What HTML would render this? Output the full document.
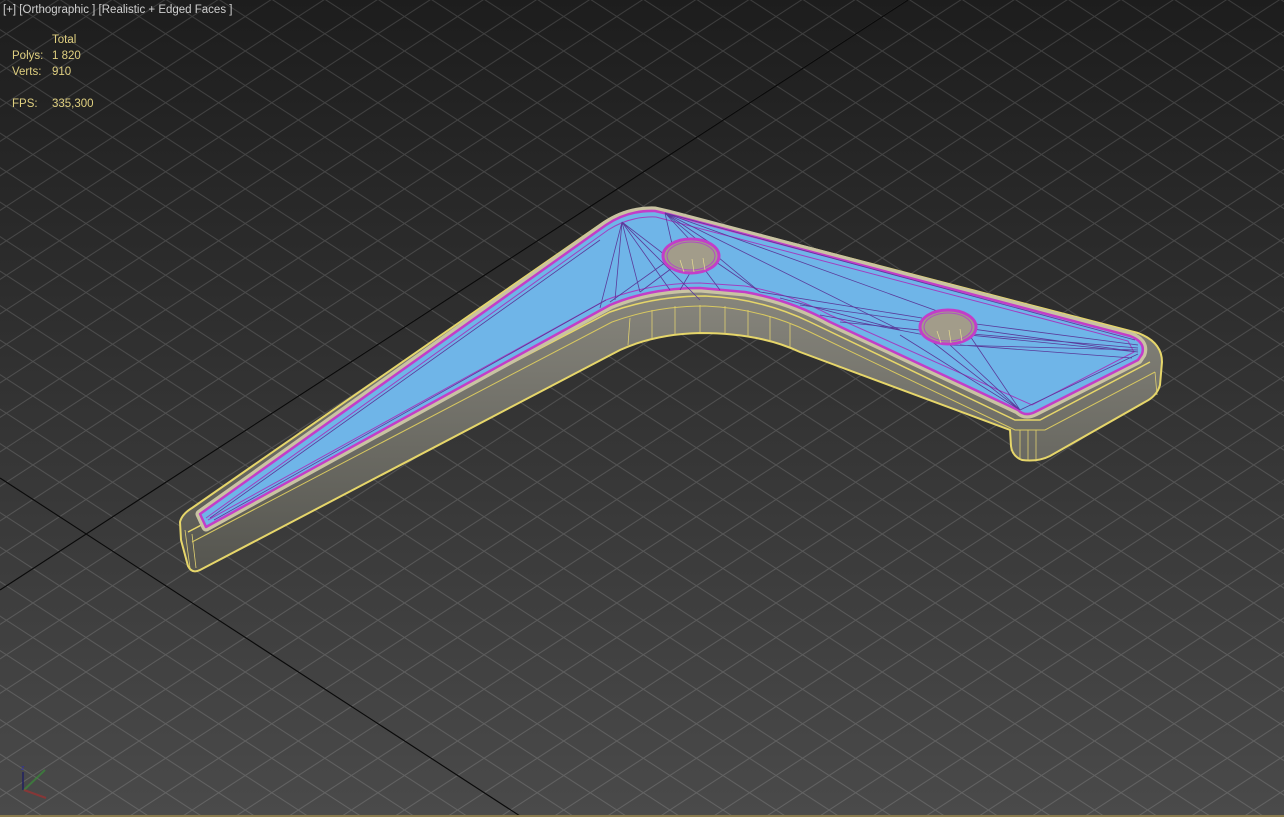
<!DOCTYPE html>
<html><head><meta charset="utf-8"><style>
html,body{margin:0;padding:0;width:1284px;height:817px;overflow:hidden;background:#2a2a2a}
svg{position:absolute;left:0;top:0}
.t{position:absolute;font-family:"Liberation Sans",sans-serif;font-size:11.5px;white-space:pre;letter-spacing:0px}
</style></head><body>
<svg width="1284" height="817" viewBox="0 0 1284 817">
<defs>
<linearGradient id="bg" x1="0" y1="0" x2="0" y2="1">
<stop offset="0" stop-color="#1d1d1d"/><stop offset="1" stop-color="#4a4a4a"/>
</linearGradient>
<pattern id="grid" patternUnits="userSpaceOnUse" x="32.92" y="16.5" width="53.08" height="34.5">
<path d="M0,0L53.08,34.5M0,34.5L53.08,0" stroke="rgba(255,255,255,0.14)" stroke-width="1" fill="none"/>
</pattern>
<linearGradient id="wall" x1="0" y1="0" x2="0" y2="1">
<stop offset="0" stop-color="#96948a"/><stop offset="1" stop-color="#55554f"/>
</linearGradient>
</defs>
<rect width="1284" height="817" fill="url(#bg)"/>
<rect width="1284" height="817" fill="url(#grid)"/>
<line x1="0" y1="478" x2="520" y2="816" stroke="#0a0a0a" stroke-width="1.2"/>
<line x1="0" y1="590" x2="908" y2="0" stroke="#0a0a0a" stroke-width="1.2"/>

<path d="M180,522 Q182,514 192,508 L604,222 Q630,205 660,209 L1138,333 Q1162,342 1162,362 L1160,385 Q1157,396 1145,402 L1050,456 Q1038,462 1022,460 Q1012,456 1011,446 L1010,430 L800,352 Q760,333 700,333 Q655,334 620,350 L200,570 Q192,574 188,566 L181,540 Z" fill="url(#wall)" stroke="#e6d66a" stroke-width="2"/>
<path d="M188,532 L610,312 Q655,296 705,296 Q760,298 810,322 L1015,420 L1040,420 L1150,362" fill="none" stroke="#e6d66a" stroke-width="1.5"/>
<path d="M192,542 L612,322 Q655,306 705,306 Q760,308 810,332 L1015,430 L1045,430 L1155,372" fill="none" stroke="#d8c860" stroke-width="1"/>
<g stroke="#e0d070" stroke-width="0.8">
<line x1="630" y1="318" x2="628" y2="345"/><line x1="652" y1="310" x2="652" y2="338"/>
<line x1="675" y1="306" x2="675" y2="334"/><line x1="700" y1="305" x2="700" y2="333"/>
<line x1="725" y1="306" x2="725" y2="334"/><line x1="748" y1="310" x2="748" y2="337"/>
<line x1="770" y1="316" x2="770" y2="342"/><line x1="790" y1="324" x2="790" y2="348"/>
<line x1="1020" y1="430" x2="1020" y2="458"/><line x1="1028" y1="430" x2="1028" y2="460"/>
<line x1="1036" y1="430" x2="1036" y2="460"/><line x1="1155" y1="372" x2="1157" y2="395"/>
<line x1="185" y1="530" x2="190" y2="568"/><line x1="192" y1="534" x2="196" y2="568"/>
</g>
<path d="M200,514 L606,225 Q628,210 655,211 L668,214 L1130,336 Q1146,342 1142,354 L1138,360 L1035,412 Q1025,417 1018,410 L830,322 Q790,300 745,292 L700,288 Q650,288 610,305 L206,527 Z" fill="#bdb89c" stroke="#c9c3a2" stroke-width="9" stroke-linejoin="round"/>
<path d="M200,514 L606,225 Q628,210 655,211 L668,214 L1130,336 Q1146,342 1142,354 L1138,360 L1035,412 Q1025,417 1018,410 L830,322 Q790,300 745,292 L700,288 Q650,288 610,305 L206,527 Z" fill="#6fb5e8" stroke="#c23ec8" stroke-width="2.5" stroke-linejoin="round"/>
<path d="M206,518 L608,230 Q630,216 656,217 L1128,341 L1134,352 L1032,405 L830,315 Q790,294 745,286 L700,283 Q650,283 606,300 L208,520" fill="none" stroke="#a040c0" stroke-width="1"/>
<g stroke="#5a3a9a" stroke-width="0.8" fill="none">
<path d="M622,222 L600,308 M622,222 L665,255 M622,222 L640,292 M622,222 L700,300 M622,222 L670,290 M622,222 L615,300"/>
<path d="M665,213 L672,244 M665,213 L690,240 M665,213 L712,244 M665,213 L760,292 M665,213 L900,330 M665,213 L1135,340 M665,213 L940,312"/>
<path d="M666,262 L610,302 M672,268 L640,292 M690,273 L680,290 M705,270 L720,290 M716,262 L760,292"/>
<path d="M1138,345 L976,324 M1138,348 L972,334 M1138,350 L950,345 M1138,352 L840,322 M1138,352 L800,305 M1138,354 L1020,410 M1132,358 L960,345"/>
<path d="M1020,410 L930,340 M1020,410 L950,345 M1020,410 L970,336 M1020,410 L900,335"/>
<path d="M922,318 L760,292 M925,335 L820,315 M900,330 L780,298"/>
<path d="M210,518 L600,240 M214,520 L606,300"/>
</g>
<ellipse cx="691" cy="256" rx="28" ry="17" fill="#a29c8a" stroke="#c23ec8" stroke-width="3"/>
<ellipse cx="691" cy="256" rx="24" ry="14" fill="none" stroke="#b050c0" stroke-width="1"/>
<g stroke="#e8dc90" stroke-width="0.7"><line x1="680" y1="260" x2="684" y2="272"/><line x1="692" y1="259" x2="694" y2="272"/><line x1="703" y1="258" x2="705" y2="270"/></g>
<ellipse cx="948" cy="327" rx="28" ry="17" fill="#a29c8a" stroke="#c23ec8" stroke-width="3"/>
<ellipse cx="948" cy="327" rx="24" ry="14" fill="none" stroke="#b050c0" stroke-width="1"/>
<g stroke="#e8dc90" stroke-width="0.7"><line x1="937" y1="331" x2="941" y2="343"/><line x1="949" y1="330" x2="951" y2="343"/><line x1="960" y1="329" x2="962" y2="341"/></g>

<line x1="23" y1="772" x2="23" y2="790" stroke="#202060" stroke-width="1.5"/>
<text x="21" y="770" font-family="Liberation Sans" font-size="7" fill="#3030a0">z</text>
<line x1="24" y1="790" x2="45" y2="770" stroke="#3a8a3a" stroke-width="2" opacity="0.7"/>
<line x1="24" y1="790" x2="46" y2="798" stroke="#a03030" stroke-width="2" opacity="0.7"/>
<rect x="0" y="815" width="1284" height="2" fill="#8a7a4c"/>
</svg>
<div class="t" style="left:3px;top:4px;color:#d0d0d0">[+] [Orthographic ] [Realistic + Edged Faces ]</div>
<div class="t" style="left:52px;top:34px;color:#e0d080">Total</div>
<div class="t" style="left:12px;top:50px;color:#e0d080">Polys:</div>
<div class="t" style="left:52px;top:50px;color:#e0d080">1 820</div>
<div class="t" style="left:12px;top:66px;color:#e0d080">Verts:</div>
<div class="t" style="left:52px;top:66px;color:#e0d080">910</div>
<div class="t" style="left:12px;top:98px;color:#e0d080">FPS:</div>
<div class="t" style="left:52px;top:98px;color:#e0d080">335,300</div>
</body></html>
